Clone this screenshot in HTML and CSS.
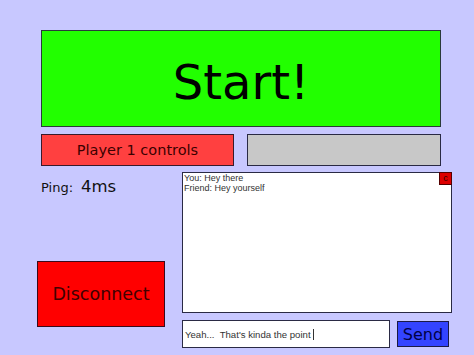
FILE: index.html
```html
<!DOCTYPE html>
<html>
<head>
<meta charset="utf-8">
<link rel="stylesheet" href="styles.css">
</head>
<body>
<div class="page">
  <div class="start">Start!</div>
  <div class="controls-row">
    <div class="player">Player 1 controls</div>
    <div class="blank"></div>
  </div>
  <div class="lower">
    <div class="left-col">
      <div class="ping"><span class="ping-label">Ping:</span><span class="ping-value">4ms</span></div>
      <div class="disconnect">Disconnect</div>
    </div>
    <div class="chat-col">
      <div class="chat">
        <div class="chat-line">You: Hey there</div>
        <div class="chat-line">Friend: Hey yourself</div>
        <div class="clear-btn">c</div>
      </div>
      <div class="input-row">
        <div class="input">Yeah...&nbsp; That's kinda the point<span class="caret"></span></div>
        <div class="send">Send</div>
      </div>
    </div>
  </div>
</div>
</body>
</html>
```
FILE: styles.css
```css
html, body {
  margin: 0;
  padding: 0;
  background: #c8c8ff;
}
body {
  width: 474px;
  height: 355px;
  overflow: hidden;
  font-family: "DejaVu Sans", sans-serif;
}
.page {
  padding-top: 30px;
}
.start {
  box-sizing: border-box;
  margin-left: 41px;
  width: 400px;
  height: 97px;
  background: #22ff00;
  border: 1px solid #2a3a3a;
  display: flex;
  align-items: center;
  justify-content: center;
  font-size: 48px;
  color: #000;
  padding-top: 6px;
}
.controls-row {
  display: flex;
  margin: 7px 0 0 41px;
  gap: 13px;
}
.player {
  width: 191px;
  height: 30px;
  background: #ff4040;
  border: 1px solid #3a1a2a;
  display: flex;
  align-items: center;
  justify-content: center;
  font-size: 14.5px;
  color: #3a0000;
}
.blank {
  width: 192px;
  height: 30px;
  background: #c8c8c8;
  border: 1px solid #2a2a44;
}
.lower {
  display: flex;
  margin-top: 6px;
}
.left-col {
  width: 182px;
  display: flex;
  flex-direction: column;
}
.ping {
  margin: 5px 0 0 41px;
  display: flex;
  align-items: baseline;
  gap: 8px;
  color: #111;
}
.ping-label {
  font-size: 13px;
}
.ping-value {
  font-size: 16.5px;
}
.disconnect {
  margin: 65px 0 0 37px;
  width: 126px;
  height: 64px;
  background: #ff0000;
  border: 1px solid #3a0a1a;
  display: flex;
  align-items: center;
  justify-content: center;
  font-size: 17.5px;
  color: #400000;
}
.chat-col {
  display: flex;
  flex-direction: column;
}
.chat {
  position: relative;
  width: 267px;
  height: 139px;
  background: #fff;
  border: 1px solid #2a2a44;
  padding: 0 0 0 1px;
  font-family: "Liberation Sans", Arial, sans-serif;
  font-size: 9px;
  line-height: 10px;
  color: #333;
}
.chat-line {
  white-space: nowrap;
}
.clear-btn {
  position: absolute;
  top: -1px;
  right: -1px;
  width: 11px;
  height: 11px;
  background: #dd0000;
  border: 1px solid #550000;
  color: #330000;
  font-size: 9px;
  line-height: 10px;
  text-align: center;
}
.input-row {
  display: flex;
  align-items: flex-start;
  margin-top: 7px;
  gap: 7px;
}
.input {
  width: 204px;
  height: 26px;
  background: #fff;
  border: 1px solid #2a2a44;
  padding-left: 2px;
  display: flex;
  align-items: center;
  font-family: "Liberation Sans", Arial, sans-serif;
  font-size: 9.6px;
  color: #333;
  white-space: pre;
}
.caret {
  display: inline-block;
  width: 1px;
  height: 11px;
  background: #333;
  margin-left: 2px;
}
.send {
  margin-top: 1px;
  width: 50px;
  height: 24px;
  background: #3344ff;
  border: 1px solid #1a1a44;
  display: flex;
  align-items: center;
  justify-content: center;
  font-size: 16px;
  color: #000044;
}
```
